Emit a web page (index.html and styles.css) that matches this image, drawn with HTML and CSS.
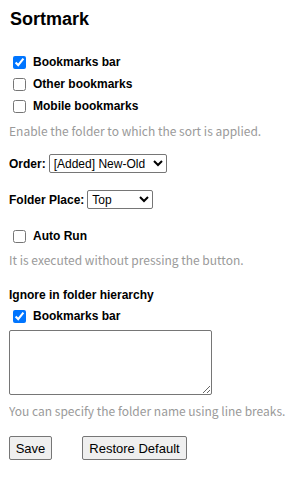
FILE: index.html
```html
<!DOCTYPE html>
<html lang="en">
<head>
<meta charset="UTF-8">
<meta name="viewport" content="width=device-width, initial-scale=1.0">
<title>Sortmark</title>
<link rel="stylesheet" href="styles.css">
</head>
<body>
<h1 class="title">Sortmark</h1>

<div class="group">
  <label class="check"><input type="checkbox" checked> Bookmarks bar</label>
  <label class="check"><input type="checkbox"> Other bookmarks</label>
  <label class="check"><input type="checkbox"> Mobile bookmarks</label>
</div>
<p class="note">Enable the folder to which the sort is applied.</p>

<div class="field field-order">
  <label class="name">Order:</label>
  <select class="sel sel-order">
    <option>[Added] New-Old</option>
  </select>
</div>

<div class="field field-place">
  <label class="name">Folder Place:</label>
  <select class="sel sel-place">
    <option>Top</option>
  </select>
</div>

<div class="group group-auto">
  <label class="check"><input type="checkbox"> Auto Run</label>
</div>
<p class="note note-auto">It is executed without pressing the button.</p>

<div class="heading">Ignore in folder hierarchy</div>
<label class="check check-ignore"><input type="checkbox" checked> Bookmarks bar</label>
<textarea class="names"></textarea>
<p class="note note-names">You can specify the folder name using line breaks.</p>

<div class="buttons">
  <button class="btn btn-save">Save</button>
  <button class="btn btn-restore">Restore Default</button>
</div>
</body>
</html>
```

FILE: styles.css
```css
body {
  margin: 8px 9px;
  font-family: "Liberation Sans", Arial, sans-serif;
  font-size: 12px;
  color: #000;
  background: #fff;
}

.title {
  font-size: 18px;
  font-weight: bold;
  margin: 0 0 0 1px;
  line-height: 22px;
}

.group {
  margin-top: 21px;
}

.check {
  display: flex;
  align-items: center;
  font-weight: bold;
  height: 22px;
}

.check input {
  width: 13px;
  height: 13px;
  margin: 0 7px 0 4px;
}

.note {
  color: #9a9a9a;
  font-family: "Noto Sans CJK JP", "DejaVu Sans", sans-serif;
  font-size: 12px;
  margin: 6px 0 0 0;
  line-height: 16px;
}

.field {
  display: flex;
  align-items: center;
  height: 19px;
}

.field-order {
  margin-top: 15px;
}

.field-place {
  margin-top: 17px;
}

.name {
  font-weight: bold;
  margin-right: 3px;
}

.sel {
  font-family: "Liberation Sans", Arial, sans-serif;
  font-size: 12px;
  height: 19px;
  padding: 0;
  border: 1px solid #767676;
  border-radius: 2px;
  background: #fff;
  color: #000;
}

.sel-order {
  width: 118px;
}

.sel-place {
  width: 66px;
}

.group-auto {
  margin-top: 16px;
}

.note-auto {
  margin-top: 5px;
}

.heading {
  font-weight: bold;
  margin-top: 18px;
  line-height: 18px;
}

.check-ignore {
  margin-top: 1px;
}

.names {
  display: block;
  width: 203px;
  height: 65px;
  box-sizing: border-box;
  margin: 3px 0 0 0;
  border: 1px solid #767676;
  border-radius: 2px;
  resize: both;
}

.note-names {
  margin-top: 8px;
}

.buttons {
  display: flex;
  gap: 30px;
  margin-top: 17px;
}

.btn {
  font-family: "Liberation Sans", Arial, sans-serif;
  font-size: 13px;
  height: 24px;
  padding: 0;
  white-space: nowrap;
  border: 1px solid #767676;
  border-radius: 2px;
  background: #efefef;
  color: #000;
}

.btn-save {
  width: 43px;
}

.btn-restore {
  width: 105px;
}
```
